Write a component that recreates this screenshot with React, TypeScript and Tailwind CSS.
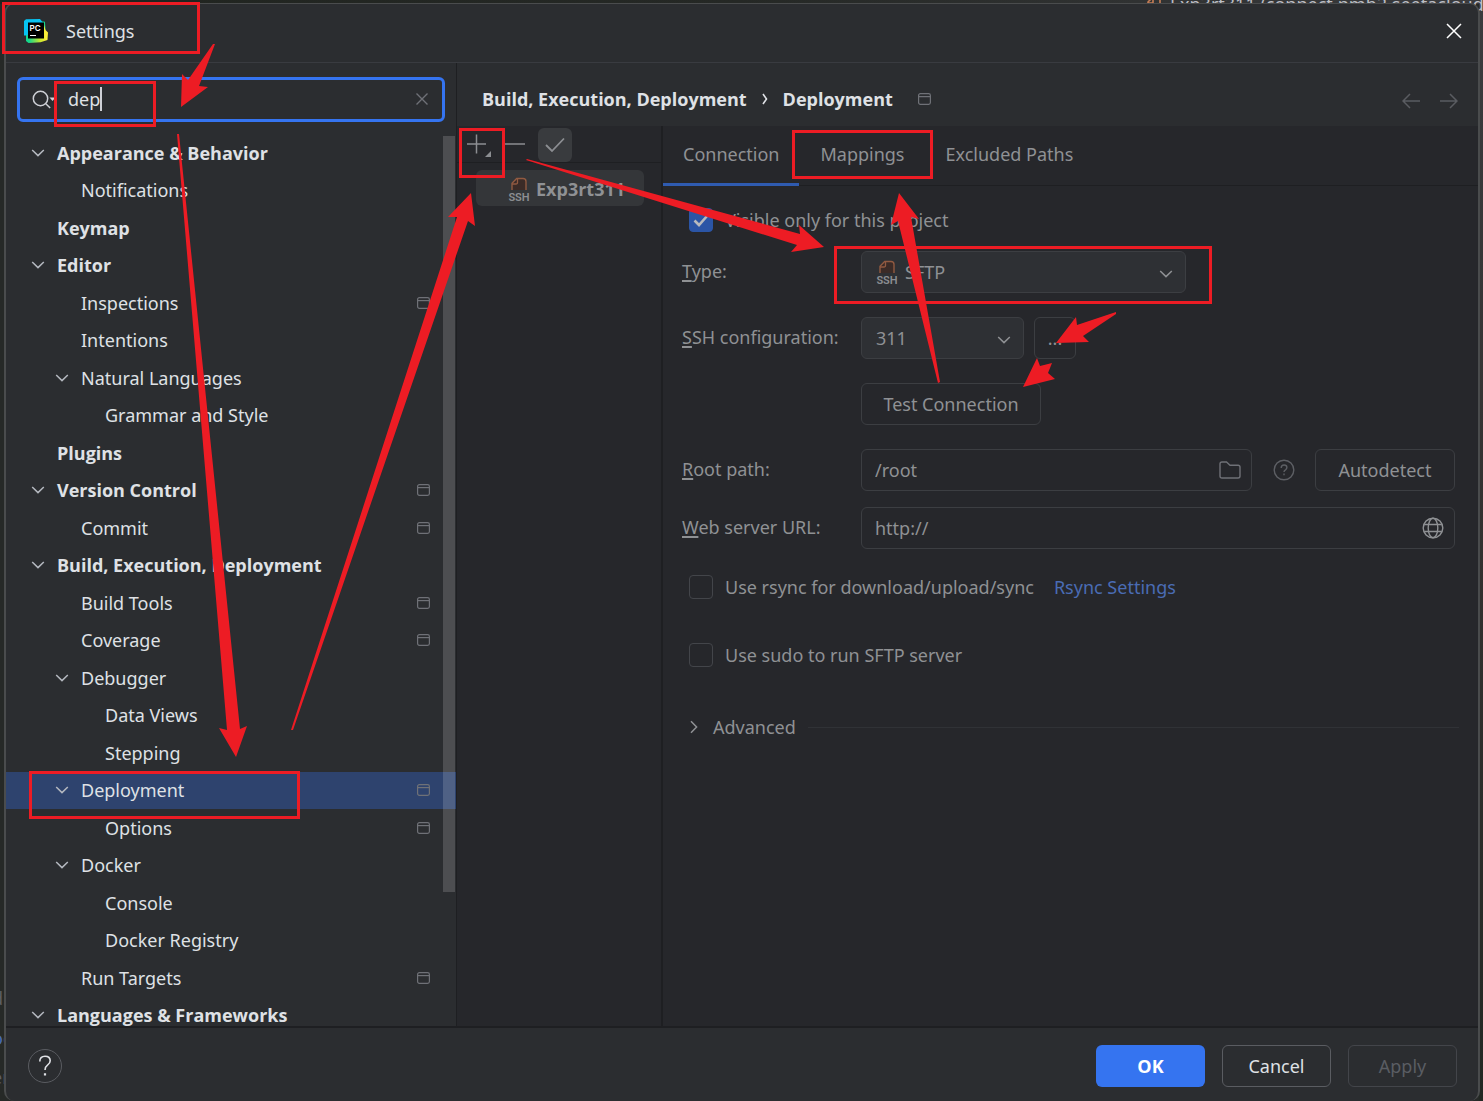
import { useState } from 'react'
import type { ReactNode } from 'react'
import clsx from 'clsx'

type TreeNode = {
  label: string
  level: number
  open?: boolean
  project?: boolean
}

const TREE: TreeNode[] = [
  { label: 'Appearance & Behavior', level: 0, open: true },
  { label: 'Notifications', level: 1 },
  { label: 'Keymap', level: 0 },
  { label: 'Editor', level: 0, open: true },
  { label: 'Inspections', level: 1, project: true },
  { label: 'Intentions', level: 1 },
  { label: 'Natural Languages', level: 1, open: true },
  { label: 'Grammar and Style', level: 2 },
  { label: 'Plugins', level: 0 },
  { label: 'Version Control', level: 0, open: true, project: true },
  { label: 'Commit', level: 1, project: true },
  { label: 'Build, Execution, Deployment', level: 0, open: true },
  { label: 'Build Tools', level: 1, project: true },
  { label: 'Coverage', level: 1, project: true },
  { label: 'Debugger', level: 1, open: true },
  { label: 'Data Views', level: 2 },
  { label: 'Stepping', level: 2 },
  { label: 'Deployment', level: 1, open: true, project: true },
  { label: 'Options', level: 2, project: true },
  { label: 'Docker', level: 1, open: true },
  { label: 'Console', level: 2 },
  { label: 'Docker Registry', level: 2 },
  { label: 'Run Targets', level: 1, project: true },
  { label: 'Languages & Frameworks', level: 0, open: true },
]

const TABS = ['Connection', 'Mappings', 'Excluded Paths']

const INDENT = ['pl-[25px]', 'pl-[49px]', 'pl-[73px]']

const BOXES = [
  [2, 2, 198, 52],
  [54, 81, 102, 46],
  [29, 771, 271, 48],
  [459, 128, 46, 50],
  [792, 130, 141, 49],
  [834, 246, 378, 58],
]

const ARROWS = [
  '215,44 199,86 208,87 181,107 182,74 188,80 213,44',
  '177,134 179,134 240,729 247,726 236,757 219,728 227,730',
  '291,730 457,217 448,217 471,193 475,226 468,221 293,730',
  '526,160 527,159 800,234 799,225 824,247 791,252 797,245',
  '938,383 898,221 891,225 899,193 919,219 911,217 940,382',
  '1116,312 1116,314 1083,336 1089,342 1056,343 1076,317 1077,325',
  '1023,387 1037,358 1040,366 1052,363 1048,373 1055,379',
]

function Chevron({ className }: { className?: string }) {
  return (
    <svg viewBox="0 0 14 8" className={clsx('h-2 w-[14px] shrink-0', className)} fill="none" stroke="currentColor" strokeWidth="1.5">
      <path d="M1.2 1l5.8 5.6L12.8 1" />
    </svg>
  )
}

function ProjectIcon() {
  return (
    <svg viewBox="0 0 13 12" className="w-[13px] h-3 shrink-0 text-[#6f7177]" fill="none" stroke="currentColor" strokeWidth="1.2">
      <rect x="0.6" y="0.6" width="11.8" height="10.8" rx="1.8" />
      <path d="M1 3.6h11" />
    </svg>
  )
}

function SshIcon() {
  return (
    <svg viewBox="0 0 22 24" className="w-[22px] h-6 shrink-0">
      <path d="M4 13V6.200L8.700 1.500H15Q18 1.500 18 4.500V13" fill="#3b2b27" stroke="#915a41" strokeWidth="1.4" />
      <path d="M9.500 2v3.500Q9.500 7 8 7H4" fill="none" stroke="#915a41" strokeWidth="1.300" />
      <text x="11" y="23.500" textAnchor="middle" fontSize="11" fontWeight="600" fontFamily="Roboto, sans-serif" fill="#8c8e92">SSH</text>
    </svg>
  )
}

function PyCharmLogo() {
  return (
    <svg viewBox="0 0 24 24" className="w-6 h-6">
      <defs>
        <linearGradient id="pc" x1="0" y1="0.6" x2="1" y2="0.5">
          <stop offset="0.1" stopColor="#14d68c" />
          <stop offset="0.6" stopColor="#c3e62e" />
          <stop offset="0.9" stopColor="#fcee39" />
        </linearGradient>
      </defs>
      <path d="M14 2l7 0.800 0.500 8.200-4 5L4 18z" fill="#14d68c" />
      <path d="M2 15l14-3 4-6 1.500 5L24 13.500 23.500 21l-7 2.200-12 0.800L2 22z" fill="url(#pc)" />
      <path d="M0 2l2-1.800L16 0l4 5-8 8-10 3.500H0z" fill="#07c3f2" />
      <rect x="4" y="3.500" width="16" height="16" fill="#000" />
      <text x="5.500" y="11.500" fontSize="8" fontWeight="600" fontFamily="Inter, sans-serif" fill="#fff">PC</text>
      <path d="M6 16.500h6" stroke="#fff" strokeWidth="1.200" />
    </svg>
  )
}

function Sidebar() {
  const [query, setQuery] = useState('dep')
  const [active, setActive] = useState('Deployment')

  return (
    <aside className="flex w-[451px] shrink-0 flex-col border-r border-[#1e1f22] pt-[14px]">
      <div className="mx-[11px] flex h-[45px] shrink-0 items-center rounded-md border-[3px] border-[#3574f0] px-3 pb-0.5">
        <svg viewBox="0 0 24 20" className="w-6 h-5 shrink-0" fill="none" stroke="#ced0d6" strokeWidth="1.500">
          <circle cx="8.500" cy="9.500" r="7.200" />
          <path d="M13.800 14.800l4.400 4.200" />
          <path d="M17.500 8.500h6l-3 3.500z" fill="#ced0d6" stroke="none" />
        </svg>
        <input aria-label="Search settings" value={query} onChange={e => setQuery(e.target.value)}
          className="ml-3 min-w-0 field-sizing-content bg-transparent text-[#dfe1e5] outline-none" />
        <span className="h-6 w-0.5 bg-[#ced0d6]" />
        <button aria-label="Clear" onClick={() => setQuery('')} className="ml-auto p-0.5 text-[#6f7177]">
          <svg viewBox="0 0 12 12" className="w-3 h-3" fill="none" stroke="currentColor" strokeWidth="1.400">
            <path d="M0.500 0.500l11 11M11.500 0.500l-11 11" />
          </svg>
        </button>
      </div>

      <div className="relative mt-3 min-h-0 flex-1 overflow-hidden">
        <ul className="grid h-[900px] auto-rows-fr">
          {TREE.map(node => (
            <li key={node.label + node.level} className="flex">
              <button onClick={() => setActive(node.label)}
                className={clsx('flex w-full items-center pr-[26px] text-left text-[#dfe1e5]', INDENT[node.level],
                  node.level === 0 && "font-['Open_Sans',sans-serif] font-bold", active === node.label && 'bg-[#2e436e]')}>
                <span className="w-[26px] shrink-0 text-[#b4b8bf]">{node.open && <Chevron />}</span>
                <span className="flex-1">{node.label}</span>
                {node.project && <ProjectIcon />}
              </button>
            </li>
          ))}
        </ul>
        <div className="absolute right-px top-0.5 h-[756px] w-3 bg-white/16" />
      </div>
    </aside>
  )
}

function ServerList() {
  return (
    <div className="flex w-[206px] shrink-0 flex-col border-r-2 border-[#1e1f22]">
      <div className="flex h-[37px] items-center border-b border-[#1e1f22] pl-[9px] pt-0.5 text-[#8c8e92]">
        <button aria-label="Add server" className="w-[26px]">
          <svg viewBox="0 0 26 24" className="w-[26px] h-6" fill="none" stroke="currentColor" strokeWidth="1.500">
            <path d="M1 11h19M10.500 1.500v19" />
            <path d="M25 18v6h-6z" fill="currentColor" stroke="none" />
          </svg>
        </button>
        <button aria-label="Remove server" className="ml-3">
          <svg viewBox="0 0 22 24" className="w-[22px] h-6" fill="none" stroke="currentColor" strokeWidth="1.500">
            <path d="M1 11h20" />
          </svg>
        </button>
        <button aria-label="Use as default" className="ml-3 flex h-[34px] w-[34px] items-center justify-center rounded-md bg-[#393b3e]">
          <svg viewBox="0 0 20 16" className="w-5 h-4" fill="none" stroke="currentColor" strokeWidth="1.800">
            <path d="M1 8l6 6L19 1.500" />
          </svg>
        </button>
      </div>
      <button className="ml-[19px] mr-[17px] mt-[7px] flex h-9 items-center gap-1.5 rounded-md bg-[#343639] pl-8 pt-0.5 font-['Open_Sans',sans-serif] font-bold text-[#8f9194]">
        <SshIcon />
        Exp3rt311
      </button>
    </div>
  )
}

function Label({ htmlFor, text }: { htmlFor: string; text: string }) {
  return (
    <label htmlFor={htmlFor} className="w-[179px] shrink-0 pb-0.5">
      <span className="underline underline-offset-2 decoration-2">{text[0]}</span>{text.slice(1)}
    </label>
  )
}

function Check({ id, label, defaultChecked, children }: { id: string; label: string; defaultChecked?: boolean; children?: ReactNode }) {
  return (
    <div className="flex h-6 items-center pl-[7px]">
      <span className="relative flex">
        <input id={id} type="checkbox" defaultChecked={defaultChecked}
          className="peer h-6 w-6 appearance-none rounded-sm border border-[#43454a] checked:border-[#2b55a6] checked:bg-[#2b55a6]" />
        <svg viewBox="0 0 24 24" className="pointer-events-none absolute inset-0 hidden h-6 w-6 peer-checked:block" fill="none" stroke="#b8babe" strokeWidth="2.600">
          <path d="M5.500 12.500l4.500 4.500 8.500-9.500" />
        </svg>
      </span>
      <label htmlFor={id} className="ml-3">{label}</label>
      {children}
    </div>
  )
}

function ConnectionForm() {
  const field = 'h-[42px] rounded-md border border-[#3c3e42]'

  return (
    <form className="flex flex-col pl-[19px] pr-[23px] pt-[22px]" onSubmit={e => e.preventDefault()}>
      <Check id="visible" label="Visible only for this project" defaultChecked />

      <div className="mt-[19px] flex items-center">
        <Label htmlFor="type" text="Type:" />
        <div className="relative w-[325px]">
          <select id="type" className={clsx(field, 'w-full appearance-none bg-[#2e3034] pl-[43px]')}>
            <option>SFTP</option>
          </select>
          <span className="pointer-events-none absolute left-[15px] top-[9px]"><SshIcon /></span>
          <Chevron className="pointer-events-none absolute right-[13px] top-[19px]" />
        </div>
      </div>

      <div className="mt-6 flex items-center">
        <Label htmlFor="ssh" text="SSH configuration:" />
        <div className="relative w-[163px]">
          <select id="ssh" className={clsx(field, 'w-full appearance-none bg-[#2e3034] pl-[14px]')}>
            <option>311</option>
          </select>
          <Chevron className="pointer-events-none absolute right-[13px] top-[19px]" />
        </div>
        <button className={clsx(field, 'ml-[10px] w-[42px]')}>...</button>
      </div>

      <button className={clsx(field, 'ml-[179px] mt-6 w-[180px] self-start')}>Test Connection</button>

      <div className="mt-6 flex items-center">
        <Label htmlFor="root" text="Root path:" />
        <div className={clsx(field, 'flex min-w-0 flex-1 items-center pl-[13px] pr-[10px]')}>
          <input id="root" defaultValue="/root" className="min-w-0 flex-1 bg-transparent outline-none" />
          <svg viewBox="0 0 22 18" className="w-[22px] h-[18px] text-[#6f7177]" fill="none" stroke="currentColor" strokeWidth="1.400">
            <path d="M1 3Q1 1 3 1h4.500l3.500 3.200h8Q21 4.200 21 6v9q0 2-2 2H3q-2 0-2-2z" />
          </svg>
        </div>
        <svg viewBox="0 0 22 22" className="ml-[21px] w-[22px] h-[22px] text-[#5d5f64]" fill="none" stroke="currentColor" strokeWidth="1.400">
          <circle cx="11" cy="11" r="9.800" />
          <path d="M8.200 9q0-3 2.900-3 2.800 0 2.800 2.600 0 1.300-1.400 2.200-1.500 0.900-1.500 2.200" />
          <path d="M11 14.600v1.600" />
        </svg>
        <button className={clsx(field, 'ml-5 w-[140px]')}>Autodetect</button>
      </div>

      <div className="mt-4 flex items-center">
        <Label htmlFor="url" text="Web server URL:" />
        <div className={clsx(field, 'flex min-w-0 flex-1 items-center pl-[13px] pr-[10px]')}>
          <input id="url" defaultValue="http://" className="min-w-0 flex-1 bg-transparent outline-none" />
          <svg viewBox="0 0 22 22" className="w-[22px] h-[22px]" fill="none" stroke="currentColor" strokeWidth="1.400">
            <circle cx="11" cy="11" r="9.800" />
            <ellipse cx="11" cy="11" rx="4.800" ry="9.800" />
            <path d="M2.200 7.500h17.600M2.200 14.500h17.600" />
          </svg>
        </div>
      </div>

      <div className="mt-[26px]">
        <Check id="rsync" label="Use rsync for download/upload/sync">
          <a href="#rsync" className="ml-5 text-[#4a6cb4]">Rsync Settings</a>
        </Check>
      </div>
      <div className="mt-11">
        <Check id="sudo" label="Use sudo to run SFTP server" />
      </div>

      <button className="-mr-1 mt-12 flex items-center">
        <Chevron className="ml-[5px] -rotate-90" />
        <span className="ml-3">Advanced</span>
        <span className="ml-3 h-px flex-1 bg-[#303236]" />
      </button>
    </form>
  )
}

function Details() {
  const [tab, setTab] = useState('Connection')

  return (
    <div className="flex min-w-0 flex-1 flex-col text-[#8f9194]">
      <div role="tablist" className="flex h-[60px] gap-px border-b border-[#1e1f22]">
        {TABS.map(t => (
          <button key={t} role="tab" aria-selected={tab === t} onClick={() => setTab(t)}
            className={clsx('-mb-px border-b-[3px] px-5 pb-0.5', tab === t ? 'border-[#2f5bb0]' : 'border-transparent')}>
            {t}
          </button>
        ))}
      </div>
      <ConnectionForm />
    </div>
  )
}

function Footer() {
  return (
    <footer className="flex h-[75px] shrink-0 items-center border-t-2 border-[#1e1f22] pl-[22px] pr-[21px] pt-[3px]">
      <button aria-label="Help" className="flex h-[34px] w-[34px] items-center justify-center rounded-full border border-[#5a5c61] text-[#dfe1e5]">
        <svg viewBox="0 0 14 22" className="w-[14px] h-[22px]" fill="none" stroke="currentColor" strokeWidth="1.600">
          <path d="M1.800 6.500Q1.800 1.200 7 1.200q5.200 0 5.200 4.600 0 2.500-2.700 4.400Q7 12 7 15" />
          <path d="M7 18.200v2.400" strokeWidth="2.200" />
        </svg>
      </button>
      <div className="ml-auto flex gap-[17px]">
        <button className="h-[42px] w-[109px] rounded-md bg-[#3574f0] font-['Open_Sans',sans-serif] font-bold text-white">OK</button>
        <button className="h-[42px] w-[109px] rounded-md border border-[#5a5c61] text-[#dfe1e5]">Cancel</button>
        <button disabled className="h-[42px] w-[109px] rounded-md border border-[#43454a] text-[#5a5d63]">Apply</button>
      </div>
    </footer>
  )
}

// editor window that peeks out around the dialog
function Backdrop() {
  return (
    <div className="absolute inset-0 overflow-hidden text-[#bcbec4]">
      <div className="absolute inset-x-0 top-0 h-1 bg-gradient-to-r from-[#20241f] via-[#252825] to-[#3a3b3e]" />
      <div className="absolute right-0 top-0 h-full w-1 bg-gradient-to-b from-[#3a3b3e] via-[#33302f] to-[#222823]" />
      <svg viewBox="0 0 16 16" className="absolute -top-1 left-[1146px] h-4 w-4" fill="none" stroke="#c77d55" strokeWidth="1.600">
        <path d="M2 14V6l4-4h8v12M7 2v5H2" />
      </svg>
      <p className="absolute -top-2 left-[1170px] whitespace-nowrap">Exp3rt311 (connect.nmb2.seetacloud</p>
      <p className="absolute -left-2 top-[986px] text-[#5c5e63]">d.</p>
      <p className="absolute -left-2 top-[1026px] text-[#4a6cb4]">oc</p>
      <p className="absolute -left-2 top-[1065px] text-[#5c5e63]">er</p>
    </div>
  )
}

function Annotations() {
  return (
    <svg className="pointer-events-none absolute left-0 top-0 h-[1101px] w-[1483px]" viewBox="0 0 1483 1101">
      {BOXES.map(([x, y, w, h]) => (
        <rect key={`${x}-${y}`} x={x + 1.5} y={y + 1.5} width={w - 3} height={h - 3} fill="none" stroke="#ed1c24" strokeWidth="3" />
      ))}
      {ARROWS.map(points => <polygon key={points} points={points} fill="#ed1c24" />)}
    </svg>
  )
}

export default function App() {
  return (
    <div className="relative h-screen overflow-hidden bg-[#262927] pl-1 pr-[3px] pt-[3px] font-['Noto_Sans',sans-serif] text-[18px] leading-6">
      <Backdrop />
      <div className="relative flex h-full flex-col overflow-hidden rounded-[10px] border-2 border-b-0 border-t border-[#4a4c4d] bg-[#2b2d30]">
        <header className="flex h-[59px] shrink-0 items-center border-b border-[#393b40] pb-1 pl-[18px] pr-4 text-[#dfe1e5]">
          <PyCharmLogo />
          <h1 className="ml-[18px]">Settings</h1>
          <button aria-label="Close" className="ml-auto text-white">
            <svg viewBox="0 0 16 16" className="w-4 h-4" fill="none" stroke="currentColor" strokeWidth="1.500">
              <path d="M1 1l14 14M15 1L1 15" />
            </svg>
          </button>
        </header>

        <div className="flex min-h-0 flex-1">
          <Sidebar />
          <main className="flex min-w-0 flex-1 flex-col">
            <div className="flex h-[63px] shrink-0 items-center pl-[25px] pr-5 pt-[9px] font-['Open_Sans',sans-serif] font-bold text-[#dfe1e5]">
              <span>Build, Execution, Deployment</span>
              <svg viewBox="0 0 6 12" className="mx-[15px] h-3 w-1.5" fill="none" stroke="currentColor" strokeWidth="1.600">
                <path d="M1 1l3.500 5L1 11" />
              </svg>
              <span className="mr-[25px]">Deployment</span>
              <ProjectIcon />
              <div className="ml-auto flex gap-5 pt-1 text-[#5a5c61]">
                <button aria-label="Back">
                  <svg viewBox="0 0 18 16" className="w-[18px] h-4" fill="none" stroke="currentColor" strokeWidth="1.500">
                    <path d="M18 8H1M8 1L1 8l7 7" />
                  </svg>
                </button>
                <button aria-label="Forward">
                  <svg viewBox="0 0 18 16" className="w-[18px] h-4" fill="none" stroke="currentColor" strokeWidth="1.500">
                    <path d="M0 8h17M10 1l7 7-7 7" />
                  </svg>
                </button>
              </div>
            </div>
            <div className="flex min-h-0 flex-1 bg-[#26272b]">
              <ServerList />
              <Details />
            </div>
          </main>
        </div>

        <Footer />
      </div>
      <Annotations />
    </div>
  )
}
